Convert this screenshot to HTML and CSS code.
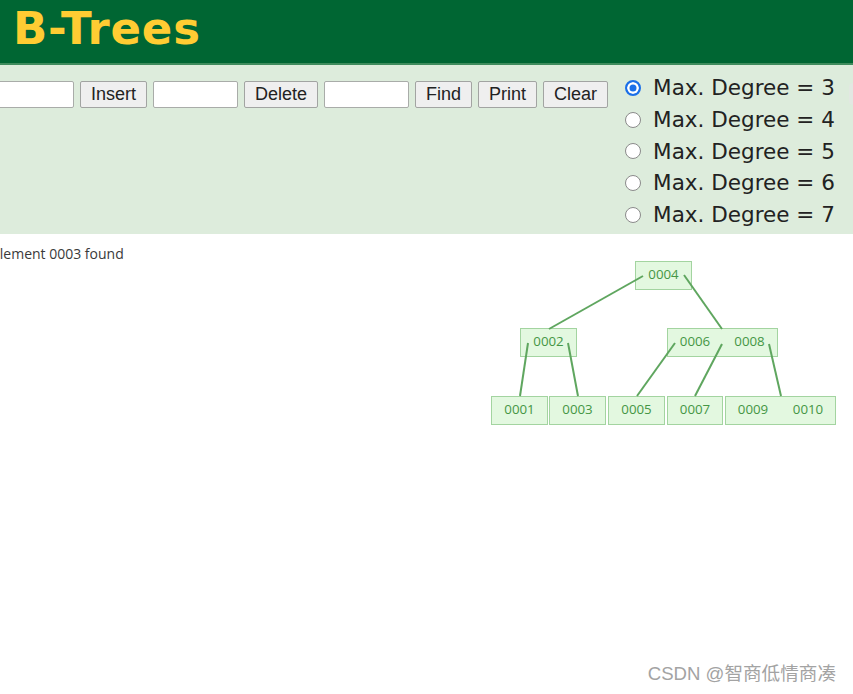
FILE: index.html
```html
<!DOCTYPE html>
<html>
<head>
<meta charset="utf-8">
<title>B-Trees</title>
<link rel="stylesheet" href="styles.css">
</head>
<body>
<div class="page">
  <header class="header">
    <h1 class="title">B-Trees</h1>
  </header>
  <section class="panel">
    <div class="controls">
      <input class="field" type="text">
      <button class="btn">Insert</button>
      <input class="field" type="text">
      <button class="btn">Delete</button>
      <input class="field" type="text">
      <button class="btn">Find</button>
      <button class="btn">Print</button>
      <button class="btn">Clear</button>
    </div>
    <div class="degrees">
      <label class="degree"><input class="radio" type="radio" name="deg" checked><span>Max. Degree = 3</span></label>
      <label class="degree"><input class="radio" type="radio" name="deg"><span>Max. Degree = 4</span></label>
      <label class="degree"><input class="radio" type="radio" name="deg"><span>Max. Degree = 5</span></label>
      <label class="degree"><input class="radio" type="radio" name="deg"><span>Max. Degree = 6</span></label>
      <label class="degree"><input class="radio" type="radio" name="deg"><span>Max. Degree = 7</span></label>
    </div>
    <div class="edge-box"></div>
  </section>
  <main class="main">
    <p class="status">Element 0003 found</p>
    <svg class="tree" width="853" height="459" viewBox="0 235 853 459" xmlns="http://www.w3.org/2000/svg">
      <g class="nodes">
        <rect x="635.5" y="262.5" width="56" height="28"/>
        <rect x="520.5" y="329.5" width="56" height="28"/>
        <rect x="667.5" y="329.5" width="110" height="28"/>
        <rect x="491.5" y="397.5" width="56" height="28"/>
        <rect x="549.5" y="397.5" width="56" height="28"/>
        <rect x="608.5" y="397.5" width="56" height="28"/>
        <rect x="667.5" y="397.5" width="55" height="28"/>
        <rect x="725.5" y="397.5" width="110" height="28"/>
      </g>
      <g class="keys">
        <text x="663.5" y="280">0004</text>
        <text x="548.5" y="347">0002</text>
        <text x="695" y="347">0006</text>
        <text x="749.5" y="347">0008</text>
        <text x="519.5" y="415">0001</text>
        <text x="577.5" y="415">0003</text>
        <text x="636.5" y="415">0005</text>
        <text x="695" y="415">0007</text>
        <text x="753" y="415">0009</text>
        <text x="808" y="415">0010</text>
      </g>
      <g class="edges">
        <line x1="643" y1="277" x2="549" y2="330"/>
        <line x1="684" y1="276" x2="722" y2="330"/>
        <line x1="528" y1="344" x2="520" y2="397"/>
        <line x1="568" y1="344" x2="578" y2="397"/>
        <line x1="675" y1="344" x2="637" y2="397"/>
        <line x1="722" y1="345" x2="695" y2="397"/>
        <line x1="769" y1="345" x2="781" y2="397"/>
      </g>
    </svg>
  </main>
  <div class="watermark">CSDN @智商低情商凑</div>
</div>
</body>
</html>
```
FILE: styles.css
```css
html, body {
  margin: 0;
  padding: 0;
  background: #ffffff;
}
body {
  width: 853px;
  height: 694px;
  overflow: hidden;
}
.page {
  position: relative;
  width: 853px;
  height: 694px;
  overflow: hidden;
}
.header {
  height: 65px;
  background: #006633;
  border-bottom: 2px solid #3f8c5d;
  box-sizing: border-box;
  padding-left: 13px;
}
.title {
  margin: 0;
  font-family: "DejaVu Sans", Verdana, sans-serif;
  font-weight: bold;
  font-size: 45px;
  line-height: 57px;
  color: #ffcc33;
  letter-spacing: 0.8px;
}
.panel {
  height: 169px;
  background: #ddecdc;
  display: flex;
  align-items: flex-start;
  box-sizing: border-box;
  padding-top: 16px;
  overflow: hidden;
}
.controls {
  display: flex;
  gap: 6px;
  margin-left: -11px;
  flex: none;
}
.field {
  width: 85px;
  height: 27px;
  box-sizing: border-box;
  border: 1px solid #a9aca9;
  border-radius: 2px;
  background: #ffffff;
  margin: 0;
  padding: 0;
}
.btn {
  height: 27px;
  box-sizing: border-box;
  margin: 0;
  padding: 0 10px;
  border: 1px solid #a2a4a2;
  border-radius: 2px;
  background: #efefef;
  font-family: "Liberation Sans", Arial, sans-serif;
  font-size: 18px;
  color: #222222;
  line-height: 25px;
}
.degrees {
  display: flex;
  flex-direction: column;
  margin-left: 17px;
  margin-top: -9px;
  flex: none;
  white-space: nowrap;
}
.degree {
  display: flex;
  align-items: center;
  height: 31.7px;
  font-family: "DejaVu Sans", Verdana, sans-serif;
  font-size: 21.5px;
  color: #222222;
}
.radio {
  appearance: none;
  -webkit-appearance: none;
  flex: none;
  width: 16px;
  height: 16px;
  margin: 0 12px 0 0;
  box-sizing: border-box;
  border: 1px solid #8a8a8a;
  border-radius: 50%;
  background: #ffffff;
}
.radio:checked {
  border: 2px solid #1a6fe8;
  background: #1a6fe8;
  box-shadow: inset 0 0 0 2.5px #ffffff;
}
.edge-box {
  width: 20px;
  height: 22px;
  margin-top: 2px;
  margin-left: 14px;
  border-radius: 4px;
  background: #e2e8e2;
  flex: none;
}
.main {
  position: relative;
  height: 460px;
}
.status {
  margin: 0;
  padding-top: 11px;
  margin-left: -8px;
  font-family: "Open Sans", sans-serif;
  font-size: 14px;
  line-height: 18px;
  color: #3a3a3a;
}
.tree {
  position: absolute;
  left: 0;
  top: 0;
}
.edges line {
  stroke: #5fa65f;
  stroke-width: 2;
}
.nodes rect {
  fill: #e3f8e0;
  stroke: #a3d4a0;
  stroke-width: 1;
}
.keys text {
  font-family: "Open Sans", sans-serif;
  font-size: 13.3px;
  fill: #459645;
  text-anchor: middle;
}
.watermark {
  position: absolute;
  right: 17px;
  bottom: 9px;
  font-family: "Liberation Sans", "Noto Sans CJK SC", sans-serif;
  font-size: 18.6px;
  color: #a3a3a3;
}
```
